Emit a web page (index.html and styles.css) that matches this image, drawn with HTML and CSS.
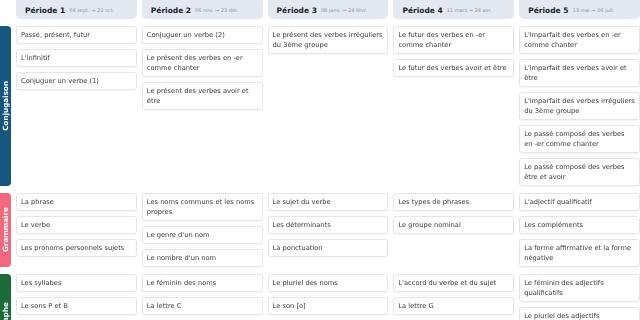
FILE: index.html
```html
<!DOCTYPE html>
<html lang="fr">
<head>
<meta charset="utf-8">
<link rel="stylesheet" href="styles.css">
</head>
<body>
<div class="board">
  <div class="corner"></div>
  <div class="period"><b>Période 1</b><span>04 sept. → 21 oct.</span></div>
  <div class="period"><b>Période 2</b><span>06 nov. → 23 déc.</span></div>
  <div class="period"><b>Période 3</b><span>08 janv. → 24 févr.</span></div>
  <div class="period"><b>Période 4</b><span>11 mars → 24 avr.</span></div>
  <div class="period"><b>Période 5</b><span>13 mai → 06 juil.</span></div>

  <div class="tab tab-conj"><span>Conjugaison</span></div>
  <div class="col">
    <div class="card">Passé, présent, futur</div>
    <div class="card">L'infinitif</div>
    <div class="card">Conjuguer un verbe (1)</div>
  </div>
  <div class="col">
    <div class="card">Conjuguer un verbe (2)</div>
    <div class="card">Le présent des verbes en -er comme chanter</div>
    <div class="card">Le présent des verbes avoir et être</div>
  </div>
  <div class="col">
    <div class="card">Le présent des verbes irréguliers du 3ème groupe</div>
  </div>
  <div class="col">
    <div class="card">Le futur des verbes en -er comme chanter</div>
    <div class="card">Le futur des verbes avoir et être</div>
  </div>
  <div class="col">
    <div class="card">L'imparfait des verbes en -er comme chanter</div>
    <div class="card">L'imparfait des verbes avoir et être</div>
    <div class="card">L'imparfait des verbes irréguliers du 3ème groupe</div>
    <div class="card">Le passé composé des verbes en -er comme chanter</div>
    <div class="card">Le passé composé des verbes être et avoir</div>
  </div>

  <div class="tab tab-gram"><span>Grammaire</span></div>
  <div class="col">
    <div class="card">La phrase</div>
    <div class="card">Le verbe</div>
    <div class="card">Les pronoms personnels sujets</div>
  </div>
  <div class="col">
    <div class="card">Les noms communs et les noms propres</div>
    <div class="card">Le genre d'un nom</div>
    <div class="card">Le nombre d'un nom</div>
  </div>
  <div class="col">
    <div class="card">Le sujet du verbe</div>
    <div class="card">Les déterminants</div>
    <div class="card">La ponctuation</div>
  </div>
  <div class="col">
    <div class="card">Les types de phrases</div>
    <div class="card">Le groupe nominal</div>
  </div>
  <div class="col">
    <div class="card">L'adjectif qualificatif</div>
    <div class="card">Les compléments</div>
    <div class="card">La forme affirmative et la forme négative</div>
  </div>

  <div class="tab tab-orth"><span>Orthographe</span></div>
  <div class="col">
    <div class="card">Les syllabes</div>
    <div class="card">Le sons P et B</div>
    <div class="card">Les sons F et V</div>
  </div>
  <div class="col">
    <div class="card">Le féminin des noms</div>
    <div class="card">La lettre C</div>
    <div class="card">Les accents</div>
  </div>
  <div class="col">
    <div class="card">Le pluriel des noms</div>
    <div class="card">Le son [o]</div>
  </div>
  <div class="col">
    <div class="card">L'accord du verbe et du sujet</div>
    <div class="card">La lettre G</div>
  </div>
  <div class="col">
    <div class="card">Le féminin des adjectifs qualificatifs</div>
    <div class="card">Le pluriel des adjectifs qualificatifs</div>
    <div class="card">Les homophones a / à</div>
    <div class="card">Les homophones et / est</div>
  </div>
</div>
</body>
</html>
```

FILE: styles.css
```css
html, body {
  margin: 0;
  padding: 0;
  background: #ffffff;
  overflow: hidden;
}

body {
  font-family: "DejaVu Sans", "Inter", sans-serif;
  color: #3a4252;
}

.board {
  width: 640px;
  display: grid;
  grid-template-columns: 11px repeat(5, 1fr);
  column-gap: 5px;
  row-gap: 7px;
}

.period {
  height: 19px;
  background: #e4e8f0;
  border-radius: 0 0 5px 5px;
  display: flex;
  align-items: center;
  gap: 4px;
  padding: 1px 0 0 9px;
  box-sizing: border-box;
  white-space: nowrap;
  overflow: hidden;
}

.period b {
  font-size: 7.5px;
  font-weight: 700;
  color: #171e2b;
}

.period span {
  font-size: 5px;
  color: #8b93a3;
}

.tab {
  border-radius: 0 4px 4px 0;
  display: flex;
  align-items: center;
  justify-content: center;
  overflow: hidden;
}

.tab span {
  writing-mode: vertical-rl;
  transform: rotate(180deg);
  color: #ffffff;
  font-size: 7.2px;
  font-weight: 600;
  white-space: nowrap;
}

.tab-conj { background: #15567f; }
.tab-gram { background: #f1687f; }
.tab-orth { background: #1b6a3a; }

.col {
  display: flex;
  flex-direction: column;
  gap: 5px;
  filter: grayscale(1);
}

.card {
  background: #ffffff;
  border: 1px solid #e1e5ec;
  border-radius: 3px;
  padding: 3px 4px;
  font-size: 6.7px;
  line-height: 10px;
  color: #333a47;
  box-shadow: 0 1px 1px rgba(30, 40, 60, 0.04);
}
```
